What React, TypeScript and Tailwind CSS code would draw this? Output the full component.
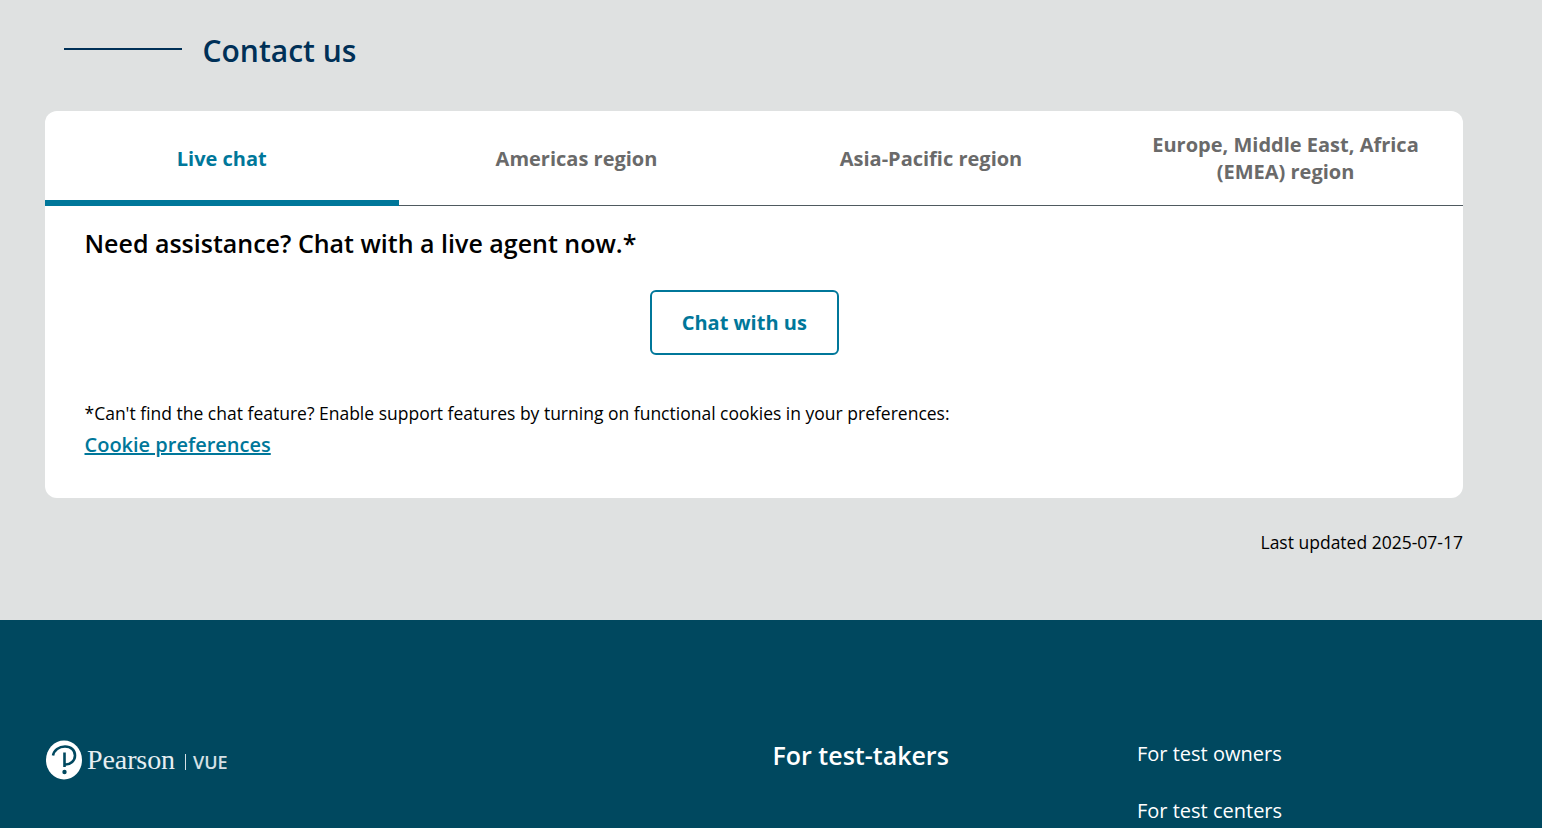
const tabs = ['Live chat', 'Americas region', 'Asia-Pacific region', 'Europe, Middle East, Africa (EMEA) region']

function PearsonLogo() {
  return (
    <div className="flex items-center">
      <svg width="38" height="40" viewBox="0 0 38 40" className="shrink-0">
        <ellipse cx="19" cy="20" rx="18" ry="19.5" fill="#fff" />
        <path
          d="M8 15.500C9 10 14 6.500 20 6.500c6 0 10 3.700 10 9s-4.500 9-9.500 9h-1V12.500V27"
          fill="none"
          stroke="#00485f"
          strokeWidth="2.6"
        />
        <circle cx="19.500" cy="32" r="2.200" fill="#00485f" />
      </svg>
      <div className="flex items-center pt-[3px]">
        <span className="-mt-[4px] ml-[4px] font-['Liberation_Serif',serif] text-[28px] leading-none tracking-[-0.1px] text-[#e6eef1]">
          Pearson
        </span>
        <span className="ml-[10px] h-[16px] w-px bg-[#d5e0e5]" />
        <span className="ml-[7px] text-[18px] leading-none font-semibold text-[#d5e0e5]">VUE</span>
      </div>
    </div>
  )
}

export default function App() {
  return (
    <div className="flex h-screen flex-col overflow-hidden bg-[#dfe1e1] font-['Open_Sans',sans-serif]">
      <div className="h-[620px] shrink-0 pr-[79px] pl-[45px]">
        <div className="flex h-[111px] items-start pt-[30px] pl-[19px]">
          <div className="mt-[18px] h-[2px] w-[118px] bg-[#003057]" />
          <h1 className="ml-[20.5px] text-[30px] leading-[41px] font-semibold text-[#003057]">Contact us</h1>
        </div>

        <div className="h-[387px] rounded-[12px] bg-white">
          <div className="grid h-[95px] grid-cols-4 border-b border-[#4f5a60]">
            {tabs.map((tab, i) => (
              <button
                key={tab}
                className={`flex h-[95px] items-center justify-center px-[40px] text-center text-[20px] leading-[27px] font-bold ${
                  i === 0 ? 'mr-px border-b-[6px] border-[#00779a] pt-[6px] text-[#00779a]' : 'pr-[40.5px] pb-px text-[#6a6a6a]'
                }`}
              >
                {tab}
              </button>
            ))}
          </div>

          <div className="pr-[40px] pl-[39.5px]">
            <p className="pt-[19px] text-[25px] leading-[36px] font-semibold text-black">
              Need assistance? Chat with a live agent now.*
            </p>
            <div className="mt-[29px] flex justify-center pr-[19px]">
              <button className="flex h-[65px] w-[189px] items-center justify-center rounded-[6px] border-2 border-[#00779a] text-[20px] font-bold text-[#00779a]">
                Chat with us
              </button>
            </div>
            <p className="mt-[43px] text-[17.5px] leading-[30px] text-black">
              *Can't find the chat feature? Enable support features by turning on functional cookies in your preferences:
            </p>
            <a href="#" className="block pt-px text-[20px] leading-[32px] font-semibold text-[#00779a] underline">
              Cookie preferences
            </a>
          </div>
        </div>

        <p className="mt-[29px] text-right text-[17.5px] leading-[30px] text-black">Last updated 2025-07-17</p>
      </div>

      <footer className="flex flex-1 items-start bg-[#00485f] pt-[120px] pl-[45px] text-white">
        <div className="w-[727.5px] shrink-0">
          <PearsonLogo />
        </div>
        <h2 className="-mt-px w-[364.5px] shrink-0 text-[25px] leading-[33px] font-semibold">For test-takers</h2>
        <ul className="-mt-px text-[20px] leading-[30px]">
          <li>For test owners</li>
          <li className="mt-[27px]">For test centers</li>
        </ul>
      </footer>
    </div>
  )
}
